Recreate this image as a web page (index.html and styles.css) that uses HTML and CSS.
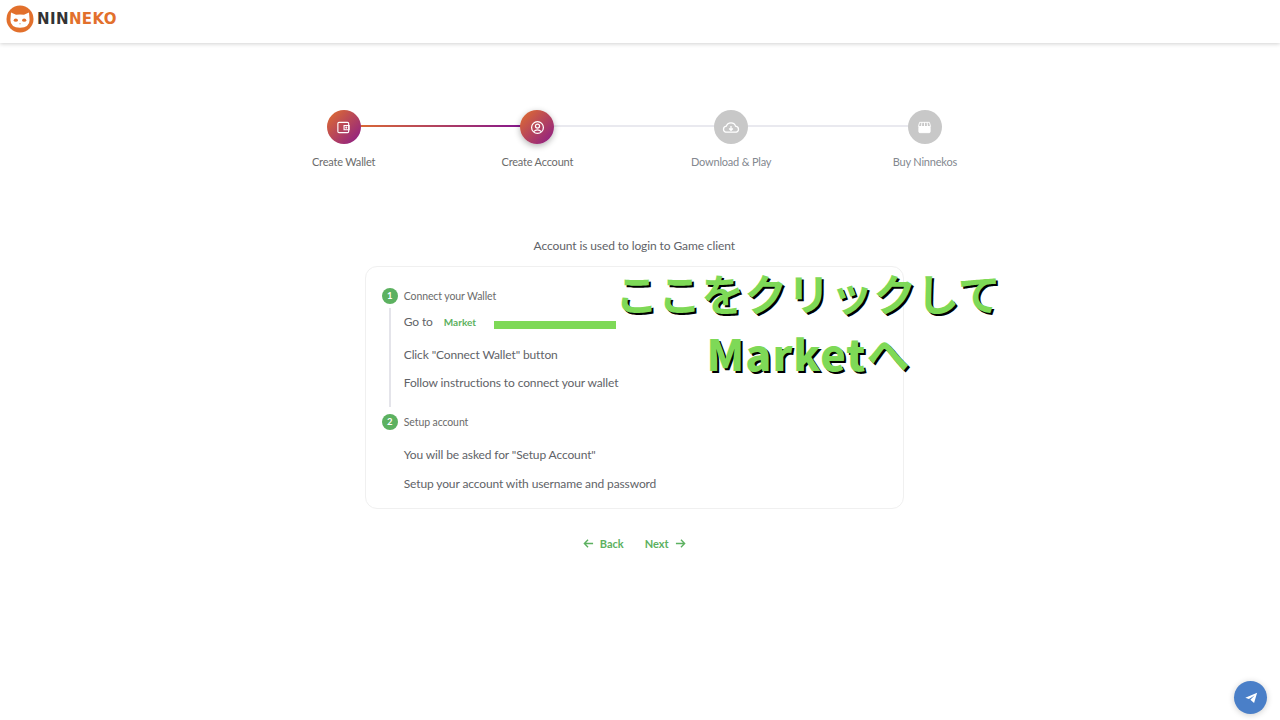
FILE: index.html
```html
<!DOCTYPE html>
<html lang="ja">
<head>
    <meta charset="UTF-8">
    <title>Ninneko</title>
    <link rel="stylesheet" href="styles.css">
</head>
<body>
    <header class="topbar">
        <a class="logo">
            <svg class="logo-mark" viewBox="0 0 28 28">
                <circle cx="14" cy="14" r="13.5" fill="#e2702c"/>
                <path d="M5 7.5 L10 9.8 Q14 9 18 9.8 L23 7.5 L23.6 15 Q23.6 22.5 14 22.8 Q4.4 22.5 4.4 15 Z" fill="#fff"/>
                <ellipse cx="9.8" cy="15.2" rx="2.1" ry="1.6" fill="#e2702c"/>
                <ellipse cx="18.2" cy="15.2" rx="2.1" ry="1.6" fill="#e2702c"/>
                <path d="M13 18.4 H15 L14 19.4 Z" fill="#e2702c"/>
            </svg>
            <span class="logo-text">NIN<span class="logo-accent">NEKO</span></span>
        </a>
    </header>

    <main class="page">
        <div class="stepper">
            <div class="step done">
                <span class="step-line"></span>
                <div class="step-icon">
                    <svg viewBox="0 0 16 16" fill="none" stroke="#fff" stroke-width="1.2">
                        <rect x="2" y="2.5" width="11.5" height="11" rx="1.2"/>
                        <path d="M14 5.8 H8.6 V10.4 H14 Z"/>
                        <circle cx="11" cy="8.1" r="0.5"/>
                    </svg>
                </div>
                <div class="step-label">Create Wallet</div>
            </div>
            <div class="step done active">
                <span class="step-line"></span>
                <div class="step-icon">
                    <svg viewBox="0 0 16 16" fill="none" stroke="#fff" stroke-width="1.3">
                        <circle cx="8" cy="8" r="6.3"/>
                        <circle cx="8" cy="6.5" r="2.2"/>
                        <path d="M3.8 12.4 Q8 8.8 12.2 12.4"/>
                    </svg>
                </div>
                <div class="step-label">Create Account</div>
            </div>
            <div class="step">
                <span class="step-line"></span>
                <div class="step-icon">
                    <svg viewBox="0 0 18 16" fill="none" stroke="#fff" stroke-width="1.4">
                        <path d="M5 13 Q1 13 1 9.8 Q1 7 4 6.6 Q5 3 9 3 Q13 3 13.8 6.6 Q17 7 17 9.8 Q17 13 13 13 Z"/>
                        <path d="M9 6.5 V10.5 M7 9 L9 11 L11 9"/>
                    </svg>
                </div>
                <div class="step-label">Download &amp; Play</div>
            </div>
            <div class="step">
                <div class="step-icon">
                    <svg viewBox="0 0 16 16" fill="none" stroke="#fff" stroke-width="1">
                        <path d="M2.8 2.5 H13.2 L14.5 7 H1.5 Z"/>
                        <path d="M5.2 2.5 L4.8 7 M8 2.5 V7 M10.8 2.5 L11.2 7"/>
                        <rect x="2" y="7" width="12" height="6.5" rx="1" fill="#fff"/>
                    </svg>
                </div>
                <div class="step-label">Buy Ninnekos</div>
            </div>
        </div>

        <p class="intro">Account is used to login to Game client</p>

        <section class="card">
            <div class="group-head"><span class="badge">1</span>Connect your Wallet</div>
            <div class="group-body with-line">
                <div class="row row-link">Go to <a class="market">Market</a></div>
                <div class="row">Click "Connect Wallet" button</div>
                <div class="row">Follow instructions to connect your wallet</div>
            </div>
            <div class="group-head"><span class="badge">2</span>Setup account</div>
            <div class="group-body">
                <div class="row">You will be asked for "Setup Account"</div>
                <div class="row">Setup your account with username and password</div>
            </div>
        </section>

        <nav class="pager">
            <a class="pager-link">
                <svg viewBox="0 0 12 12" fill="none" stroke="#5cb160" stroke-width="1.5"><path d="M11 6 H1.5 M5.5 2 L1.5 6 L5.5 10"/></svg>
                Back
            </a>
            <a class="pager-link">
                Next
                <svg viewBox="0 0 12 12" fill="none" stroke="#5cb160" stroke-width="1.5"><path d="M1 6 H10.5 M6.5 2 L10.5 6 L6.5 10"/></svg>
            </a>
        </nav>
    </main>

    <!-- annotation drawn on top of the page -->
    <div class="note-bar"></div>
    <div class="note">ここをクリックして<br><span class="note-latin">Market</span>へ</div>

    <a class="telegram">
        <svg viewBox="0 0 16 16"><path d="M15 2 L1.5 7.6 L5.6 9.2 L12 5 L7.3 10 L11.5 13.6 Z" fill="#fff"/></svg>
    </a>
</body>
</html>
```

FILE: styles.css
```css
* {
    box-sizing: border-box;
}

body {
    margin: 0;
    height: 720px;
    overflow: hidden;
    background: #fff;
    font-family: Lato, "Open Sans", sans-serif;
    color: #5f6368;
}

.topbar {
    height: 43px;
    padding: 5px 6px;
    background: #fff;
    box-shadow: 0 1px 4px rgba(0, 0, 0, 0.18);
}

.logo {
    display: flex;
    align-items: center;
    gap: 3px;
}

.logo-mark {
    width: 28px;
    height: 28px;
}

.logo-text {
    font-family: "DejaVu Sans", sans-serif;
    font-size: 15px;
    font-weight: bold;
    letter-spacing: 0.4px;
    color: #333;
}

.logo-accent {
    color: #e2702c;
}

.page {
    width: 1268.5px;
    padding-top: 67px;
}

.stepper {
    display: flex;
    width: 775px;
    margin: 0 auto;
}

.step {
    position: relative;
    flex: 1;
    text-align: center;
}

.step-icon {
    position: relative;
    display: flex;
    align-items: center;
    justify-content: center;
    width: 34px;
    height: 34px;
    margin: 0 auto;
    border-radius: 50%;
    background: #c8c8c8;
}

.step-icon svg {
    width: 15px;
    height: 15px;
}

.step:nth-child(3) .step-icon svg {
    width: 18px;
}

.done .step-icon {
    background: linear-gradient(135deg, #e2702c, #8a1a8a);
}

.active .step-icon {
    box-shadow: 0 2px 6px rgba(0, 0, 0, 0.3);
}

.step-line {
    position: absolute;
    top: 15px;
    left: 50%;
    width: 100%;
    height: 2px;
    background: #e9e9ef;
}

.step.done:first-child .step-line {
    background: linear-gradient(90deg, #e2702c, #7d0f96);
}

.step-label {
    margin-top: 10px;
    font-size: 11px;
    line-height: 15px;
    letter-spacing: -0.2px;
    color: #6b6b6b;
}

.step:nth-child(n+3) .step-label {
    color: #83888f;
}

.intro {
    margin: 69px 0 0;
    font-size: 12px;
    line-height: 16px;
    letter-spacing: -0.1px;
    text-align: center;
    color: #5f6368;
}

.card {
    width: 539px;
    height: 243px;
    margin: 12px auto 0;
    padding: 20px 16px 0;
    border: 1px solid #f0f0f0;
    border-radius: 12px;
}

.group-head {
    display: flex;
    align-items: center;
    gap: 6px;
    height: 17px;
    font-size: 10.5px;
    letter-spacing: -0.1px;
    color: #6b6b6b;
}

.badge {
    width: 16px;
    height: 16px;
    border-radius: 50%;
    background: #5cb160;
    color: #fff;
    font-size: 9.5px;
    font-weight: bold;
    line-height: 16px;
    text-align: center;
}

.group-body {
    padding: 0 0 0 22px;
}

.with-line {
    position: relative;
    height: 99px;
    margin: 4px 0 6px;
    padding-top: 5.5px;
}

.with-line::before {
    content: "";
    position: absolute;
    left: 7px;
    top: 0;
    bottom: 0;
    width: 2px;
    background: #e4e4ea;
}

.row {
    height: 28px;
    font-size: 12px;
    line-height: 28px;
    letter-spacing: -0.12px;
    color: #5f6368;
}

.row-link {
    height: 22px;
    margin-bottom: 5px;
    line-height: 16px;
}

.market {
    margin-left: 8px;
    font-size: 10px;
    font-weight: bold;
    letter-spacing: 0;
    color: #5cb160;
}

.group-body:last-child {
    padding-top: 10px;
}

.group-body:last-child .row {
    height: 29px;
    line-height: 29px;
}

.pager {
    display: flex;
    justify-content: center;
    gap: 21px;
    margin-top: 27.5px;
}

.pager-link {
    display: flex;
    align-items: center;
    gap: 6px;
    font-size: 11px;
    font-weight: bold;
    color: #5cb160;
}

.pager-link svg {
    width: 11px;
    height: 11px;
}

.note-bar {
    position: absolute;
    left: 494px;
    top: 321px;
    width: 122px;
    height: 8px;
    background: #7ed957;
}

.note {
    position: absolute;
    left: 558px;
    top: 263px;
    width: 500px;
    font-family: "Noto Sans CJK JP", sans-serif;
    font-size: 43px;
    font-weight: bold;
    line-height: 59.5px;
    text-align: center;
    color: #7ed957;
    text-shadow: 2px 2px 0 #000;
}

.note-latin {
    font-weight: 900;
    letter-spacing: 1px;
}

.telegram {
    position: absolute;
    left: 1234px;
    top: 681px;
    display: flex;
    align-items: center;
    justify-content: center;
    width: 33px;
    height: 33px;
    border-radius: 50%;
    background: #4a7fc8;
    box-shadow: 0 1px 6px rgba(0, 0, 0, 0.2);
}

.telegram svg {
    width: 14px;
    height: 14px;
}
```
